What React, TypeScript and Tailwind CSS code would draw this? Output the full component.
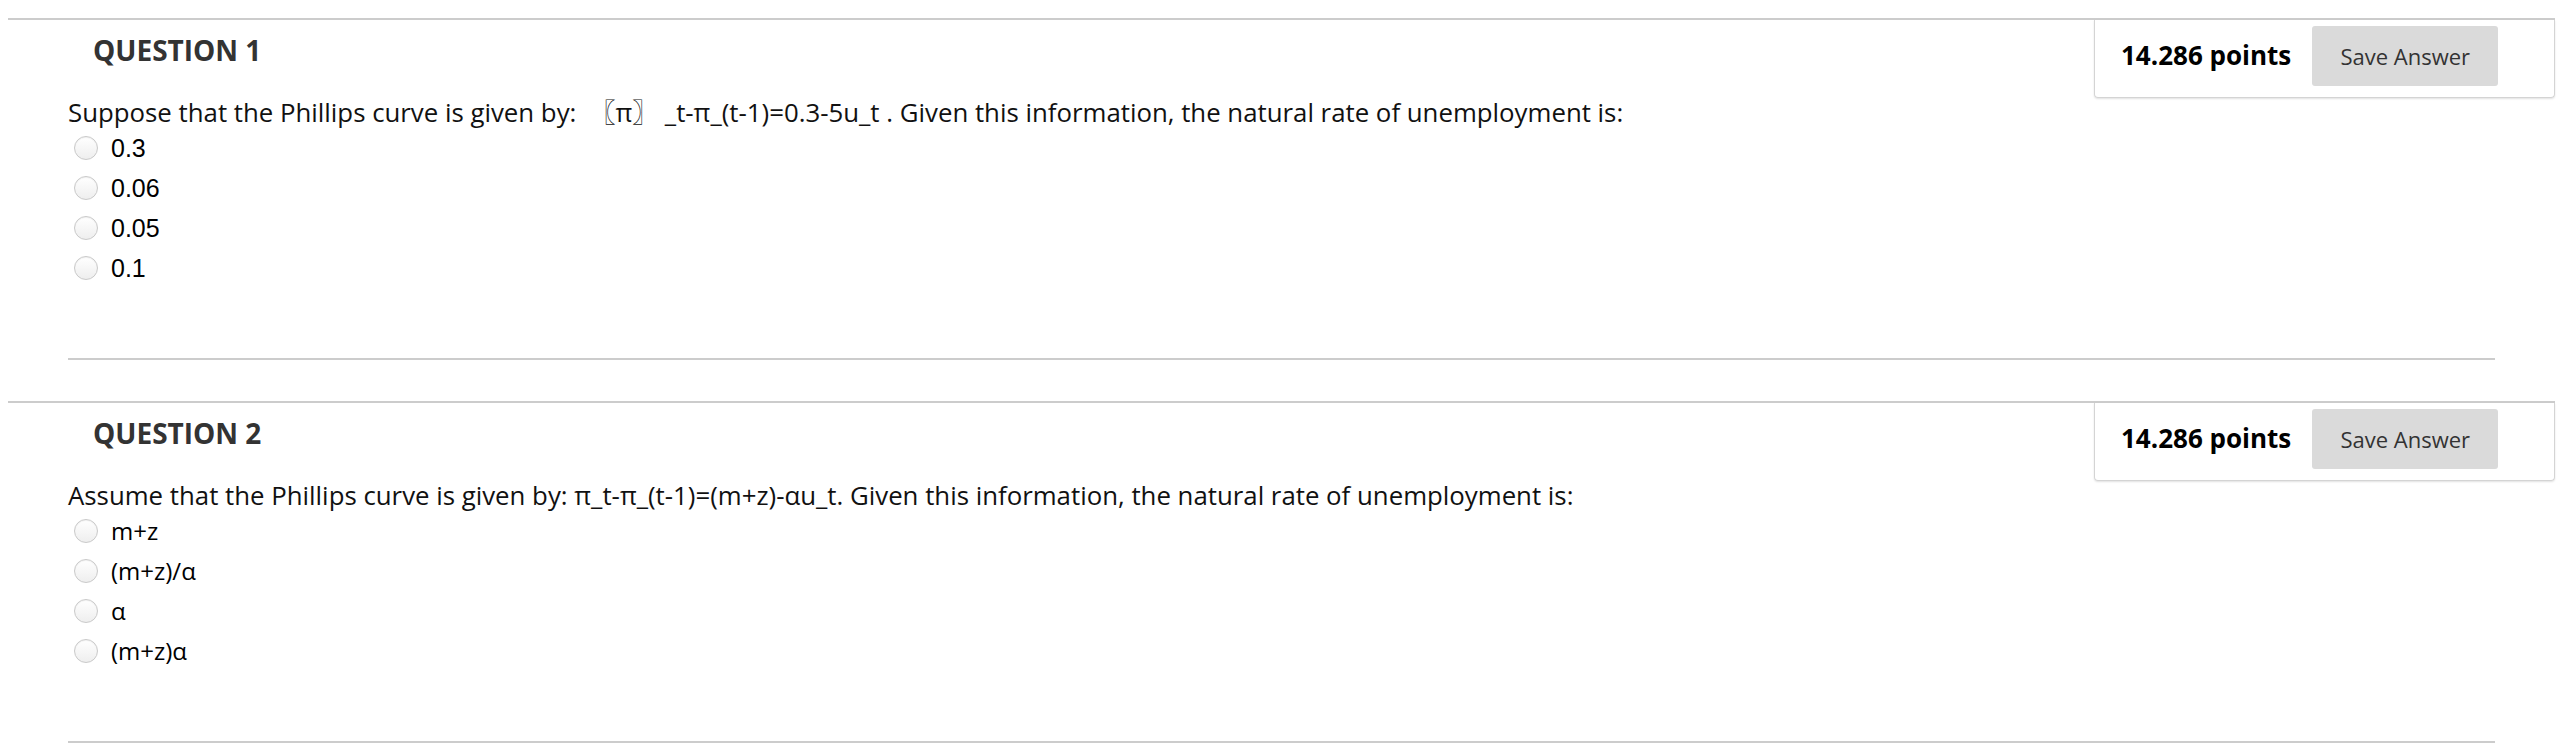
import React from "react";

const openSans = "font-['Open_Sans',_'Noto_Sans_CJK_SC',_sans-serif]";

function Radio() {
  return (
    <span className="inline-block w-[24px] h-[24px] rounded-full border border-[#c9c9c9] bg-gradient-to-b from-white to-[#eeeeee] shadow-[inset_0_1px_1px_rgba(0,0,0,0.06)] shrink-0" />
  );
}

function PointsBox() {
  return (
    <div className="w-[461px] h-[78px] border-x border-b border-[#d4d4d4] rounded-b-[4px] shadow-[0_1px_2px_rgba(0,0,0,0.12)] flex items-start pl-[26px] pt-[6px]">
      <div className={`${openSans} font-bold text-[26px] leading-[26px] text-black mt-[16px]`}>14.286 points</div>
      <div className={`${openSans} ml-[21px] w-[186px] h-[60px] rounded-[3px] bg-[#dadada] text-[#333] text-[22px] flex items-center justify-center`}>
        Save Answer
      </div>
    </div>
  );
}

function Question({
  n,
  text,
  options,
  optionClass,
}: {
  n: number;
  text: string;
  options: string[];
  optionClass: string;
}) {
  return (
    <div className="border-t-2 border-[#cccccc] h-[383px]">
      <div className="flex justify-between items-start">
        <div className={`${openSans} font-bold text-[28px] leading-[28px] text-[#333] ml-[85px] mt-[16px]`}>
          QUESTION {n}
        </div>
        <PointsBox />
      </div>
      <div className="mx-[60px]">
        <div className={`${openSans} text-[25.8px] leading-[26px] text-[#111] mt-[1px] whitespace-pre`}>{text}</div>
        <div className="flex flex-col mt-[3px]">
          {options.map((o) => (
            <div key={o} className="h-[40px] flex items-center pl-[6px] gap-[13px]">
              <Radio />
              <span className={`${optionClass} leading-[24px] text-black`}>{o}</span>
            </div>
          ))}
        </div>
        <div className="mt-[70px] border-t-2 border-[#cccccc]" />
      </div>
    </div>
  );
}

export default function App() {
  return (
    <div className="bg-white w-[2576px] h-[744px] pt-[18px] pl-[8px] pr-[21px] overflow-hidden">
      <Question
        n={1}
        text={"Suppose that the Phillips curve is given by:  〖π〗 _t-π_(t-1)=0.3-5u_t . Given this information, the natural rate of unemployment is:"}
        options={["0.3", "0.06", "0.05", "0.1"]}
        optionClass="font-['Liberation_Sans',_Arial,_sans-serif] text-[25px]"
      />
      <Question
        n={2}
        text={"Assume that the Phillips curve is given by: π_t-π_(t-1)=(m+z)-αu_t. Given this information, the natural rate of unemployment is:"}
        options={["m+z", "(m+z)/α", "α", "(m+z)α"]}
        optionClass={`${openSans} text-[24px]`}
      />
    </div>
  );
}
